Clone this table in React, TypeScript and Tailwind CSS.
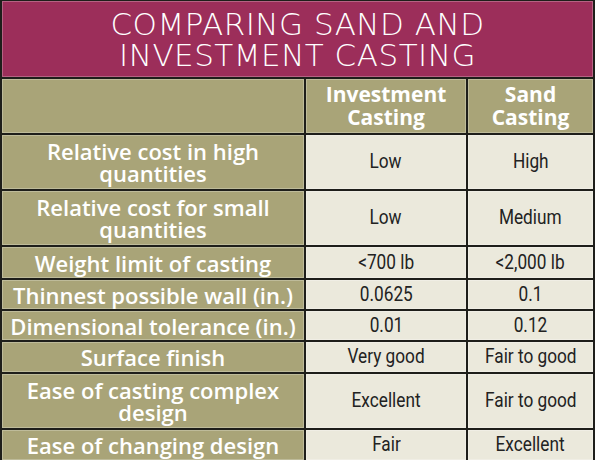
import React from "react";

const rows = [
  { label: "Relative cost in high quantities", inv: "Low", sand: "High", h: "h-[54px]" },
  { label: "Relative cost for small quantities", inv: "Low", sand: "Medium", h: "h-[54px]" },
  { label: "Weight limit of casting", inv: "<700 lb", sand: "<2,000 lb", h: "h-[31px]" },
  { label: "Thinnest possible wall (in.)", inv: "0.0625", sand: "0.1", h: "h-[29px]" },
  { label: "Dimensional tolerance (in.)", inv: "0.01", sand: "0.12", h: "h-[29px]" },
  { label: "Surface finish", inv: "Very good", sand: "Fair to good", h: "h-[30px]" },
  { label: "Ease of casting complex design", inv: "Excellent", sand: "Fair to good", h: "h-[54px]" },
  { label: "Ease of changing design", inv: "Fair", sand: "Excellent", h: "h-[30px]" },
];

const bevel = "shadow-[inset_0_0_0_1px_rgba(255,255,255,0.25)]";
const labelFont = "font-['Open_Sans',sans-serif]";
const valueFont = "font-['Roboto',sans-serif]";

export default function App() {
  return (
    <div className="w-[595px] h-[460px] bg-[#1e1e1a] pt-px px-[2px] flex flex-col gap-[2px] overflow-hidden">
      {/* Title */}
      <div
        className={`h-[76px] shrink-0 bg-[#9c2e5a] ${bevel} flex flex-col items-center justify-center pt-[2px] text-white text-[31px] leading-[31px] font-['DejaVu_Sans',sans-serif] font-extralight tracking-[0.5px]`}
      >
        <div>COMPARING SAND AND</div>
        <div>INVESTMENT CASTING</div>
      </div>

      {/* Header */}
      <div className="flex gap-[2px] h-[54px] shrink-0">
        <div className={`w-[302px] bg-[#a9a478] ${bevel}`} />
        <div
          className={`w-[160px] bg-[#a9a478] ${bevel} flex flex-col items-center justify-center text-white text-[21px] leading-[23px] font-bold ${labelFont}`}
        >
          <div>Investment</div>
          <div>Casting</div>
        </div>
        <div
          className={`w-[125px] bg-[#a9a478] ${bevel} flex flex-col items-center justify-center text-white text-[21px] leading-[23px] font-bold ${labelFont}`}
        >
          <div>Sand</div>
          <div>Casting</div>
        </div>
      </div>

      {rows.map((r) => (
        <div key={r.label} className={`flex gap-[2px] shrink-0 ${r.h}`}>
          <div
            className={`w-[302px] bg-[#a9a478] ${bevel} flex items-center justify-center text-center px-1 text-white text-[22px] leading-[22px] font-semibold ${labelFont}`}
          >
            {r.label}
          </div>
          <div
            className={`w-[160px] bg-[#ebe9dc] ${bevel} flex items-center justify-center text-[#222] text-[21px] ${valueFont}`}
          >
            <span className="inline-block scale-x-[0.82]">{r.inv}</span>
          </div>
          <div
            className={`w-[125px] bg-[#ebe9dc] ${bevel} flex items-center justify-center text-[#222] text-[21px] ${valueFont}`}
          >
            <span className="inline-block scale-x-[0.82] whitespace-nowrap">{r.sand}</span>
          </div>
        </div>
      ))}
    </div>
  );
}
